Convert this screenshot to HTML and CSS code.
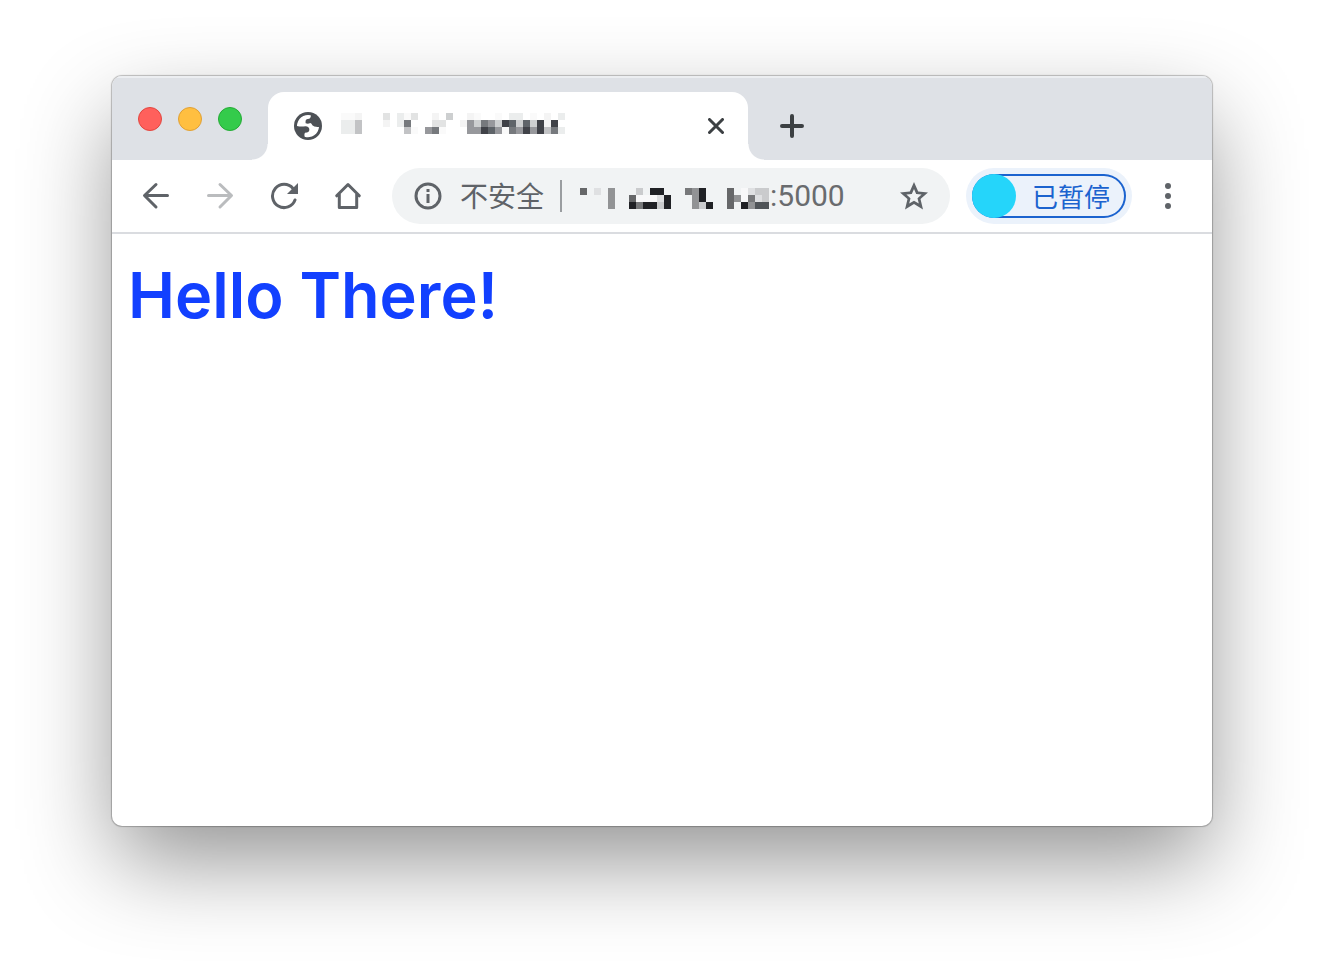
FILE: index.html
```
<!DOCTYPE html>
<html lang="zh-CN">
<head>
<meta charset="utf-8">
<meta name="viewport" content="width=device-width, initial-scale=1">
<title>Hello There!</title>
<link rel="stylesheet" href="styles.css">
</head>
<body>
<div class="window">
  <header class="tab-strip">
    <div class="lights">
      <button class="light light-close" aria-label="Close window"></button>
      <button class="light light-min" aria-label="Minimize window"></button>
      <button class="light light-max" aria-label="Zoom window"></button>
    </div>
    <div class="tab">
      <svg class="icon" width="28" height="28" viewBox="0 0 84 84" aria-hidden="true">
        <circle cx="42" cy="42" r="42" fill="#4d5156"/>
        <path fill="#fff" d="M9 42A33 33 0 0 1 50 10Q52 16 46 20Q40 20 36 23Q34 27 35 34Q42 37 49 33Q53 34 55 40Q60 46 75 45A33 33 0 0 1 32 74Q30 66 33 62Q46 62 46 53Q46 44 34 43Q20 45 9 42Z"/>
      </svg>
      <svg class="tab-mosaic" width="224" height="21" viewBox="0 0 32 3" shape-rendering="crispEdges" role="img" aria-label="Hidden title">
        <path fill="#fafafa" d="M0 0h2v1h-2zM19 0h1v1h-1zM22 0h1v1h-1zM10 2h1v1h-1zM14 2h1v1h-1zM23 2h1v1h-1zM27 0h1v1h-1zM9 0h1v1h-1z"/>
        <path fill="#f4f4f4" d="M2 0h1v1h-1zM6 1h1v1h-1zM13 0h1v1h-1zM17 1h1v1h-1zM18 0h1v1h-1zM29 0h1v2h-1z"/>
        <path fill="#ebeded" d="M0 1h2v2h-2zM8 0h1v2h-1zM24 0h2v1h-2zM31 0h1v1h-1zM31 2h1v1h-1z"/>
        <path fill="#e2e3e3" d="M6 0h1v1h-1zM10 0h1v1h-1zM13 1h2v1h-2z"/>
        <path fill="#cdcfd0" d="M15 0h1v1h-1zM19 1h1v1h-1zM22 1h1v1h-1zM25 1h1v1h-1zM27 1h1v1h-1z"/>
        <path fill="#c2c3c5" d="M2 1h1v2h-1zM9 2h1v1h-1zM29 2h1v1h-1z"/>
        <path fill="#97989c" d="M12 2h1v1h-1zM18 1h1v2h-1zM21 1h1v1h-1zM22 2h1v1h-1zM25 2h1v1h-1zM19 2h1v1h-1zM27 2h1v1h-1z"/>
        <path fill="#76797d" d="M9 1h1v1h-1zM13 2h1v1h-1zM20 1h1v1h-1zM24 2h1v1h-1zM30 2h1v1h-1z"/>
        <path fill="#5f6469" d="M21 2h1v1h-1zM24 1h1v1h-1zM26 1h1v1h-1z"/>
        <path fill="#404248" d="M20 2h1v1h-1zM23 1h1v1h-1zM26 2h1v1h-1zM28 1h1v2h-1zM30 1h1v1h-1z"/>
      </svg>
      <button class="tab-close" aria-label="Close tab">
        <svg class="icon" width="16" height="16" viewBox="0 0 16 16" fill="none" stroke="#3c4043" stroke-width="3" stroke-linecap="round"><path d="M1.500 1.500l13 13M14.500 1.500l-13 13"/></svg>
      </button>
    </div>
    <button class="new-tab" aria-label="New tab">
      <svg class="icon" width="24" height="24" viewBox="0 0 24 24" fill="none" stroke="#3c4043" stroke-width="4" stroke-linecap="round"><path d="M12 2v20M2 12h20"/></svg>
    </button>
  </header>

  <nav class="toolbar">
    <div class="nav-buttons">
      <button class="tool" aria-label="Back">
        <svg class="icon" width="28" height="28" viewBox="0 0 28 28" fill="none" stroke="#5f6368" stroke-width="3" stroke-linecap="round" stroke-linejoin="round"><path d="M25.500 13.500H3M14 2.500L2.500 13.500L14 25"/></svg>
      </button>
      <button class="tool" aria-label="Forward">
        <svg class="icon" width="28" height="28" viewBox="0 0 28 28" fill="none" stroke="#babcbe" stroke-width="3" stroke-linecap="round" stroke-linejoin="round"><path d="M2.500 13.500H25M14 2.500L25.500 13.500L14 25"/></svg>
      </button>
      <button class="tool" aria-label="Reload">
        <svg class="icon" width="28" height="28" viewBox="0 0 28 28"><path fill="none" stroke="#5f6368" stroke-width="3" stroke-linecap="round" d="M25 18A11.600 11.600 0 1 1 23 6.500"/><path fill="#5f6368" d="M28 1v11H17z"/></svg>
      </button>
      <button class="tool" aria-label="Home">
        <svg class="icon" width="28" height="28" viewBox="0 0 28 28" fill="none" stroke="#5f6368" stroke-width="3" stroke-linecap="round" stroke-linejoin="round"><path d="M2.700 13.800L14 2.500L25.300 13.800M5.300 12V25.500H22.700V12"/></svg>
      </button>
    </div>
    <div class="omnibox">
      <button class="security">
        <svg class="icon" width="28" height="28" viewBox="0 0 28 28"><circle cx="14" cy="14" r="12" fill="none" stroke="#5f6368" stroke-width="3"/><path fill="#5f6368" d="M12.500 7h3v3h-3zM12.500 12h3v9h-3z"/></svg>
        <span>不安全</span>
      </button>
      <span class="divider"></span>
      <svg class="url-mosaic" width="189" height="21" viewBox="0 0 27 3" shape-rendering="crispEdges" role="img" aria-label="Hidden address">
        <path fill="#666769" d="M0 0h1v1h-1zM7 1h1v1h-1zM21 0h1v3h-1z"/>
        <path fill="#dfe0e2" d="M2 0h1v1h-1zM11 1h1v1h-1zM24 0h1v1h-1zM25 1h1v1h-1z"/>
        <path fill="#929395" d="M4 0h1v3h-1zM16 0h1v3h-1zM22 1h1v1h-1zM24 2h1v1h-1z"/>
        <path fill="#cacbcd" d="M8 0h1v1h-1zM11 2h1v1h-1zM17 2h1v1h-1zM25 0h2v1h-2zM26 1h1v1h-1z"/>
        <path fill="#77787a" d="M8 2h1v1h-1zM15 0h1v1h-1zM24 1h1v1h-1z"/>
        <path fill="#f8f8f9" d="M8 1h3v1h-3zM23 0h1v2h-1z"/>
        <path fill="#505458" d="M25 2h2v1h-2z"/>
        <path fill="#202125" d="M7 2h1v1h-1zM9 2h2v1h-2zM10 0h2v1h-2zM12 1h1v2h-1zM17 0h1v2h-1zM18 2h1v1h-1zM23 2h1v1h-1z"/>
      </svg>
      <input class="url" type="text" aria-label="Address" value=":5000">
      <button class="tool-star" aria-label="Bookmark">
        <svg class="icon" width="28" height="28" viewBox="0 0 28 28"><path fill="#5f6368" fill-rule="evenodd" d="M14 0L18.200 9.600L28 10.400L20.500 17.100L23 27.500L14 22L5 27.500L7.500 17.100L0 10.400L9.800 9.600ZM14 7L11.800 12.100L6.400 12.600L10.500 16.200L9.200 21.600L14 18.800L18.800 21.600L17.500 16.200L21.600 12.600L16.200 12.100Z"/></svg>
      </button>
    </div>
    <button class="profile">
      <span class="profile-inner"><span class="avatar"></span><span class="profile-label">已暂停</span></span>
    </button>
    <button class="tool" aria-label="Menu">
      <svg class="icon" width="8" height="28" viewBox="0 0 8 28" fill="#5f6368"><circle cx="4" cy="4" r="3"/><circle cx="4" cy="14" r="3"/><circle cx="4" cy="24" r="3"/></svg>
    </button>
  </nav>

  <main class="page">
    <h1>Hello There!</h1>
  </main>
</div>
</body>
</html>
```
FILE: styles.css
```
* {
  box-sizing: border-box;
}

body {
  margin: 0;
  min-height: 100vh;
  padding: 76px 112px 148px;
  display: flex;
  background: #fff;
  font-family: "Roboto", "Noto Sans CJK SC", sans-serif;
}

button {
  display: flex;
  align-items: center;
  justify-content: center;
  padding: 0;
  border: 0;
  background: none;
  font: inherit;
  color: inherit;
}

.icon {
  display: block;
  flex: none;
}

.window {
  flex: 1;
  min-width: 0;
  display: flex;
  flex-direction: column;
  border-radius: 10px;
  overflow: hidden;
  background: #fff;
  box-shadow: 0 0 1px 1px rgba(0, 0, 0, 0.24), 0 38px 92px -4px rgba(0, 0, 0, 0.43);
}

.tab-strip {
  display: flex;
  height: 84px;
  padding: 16px 26px 0;
  background: #dee1e6;
  box-shadow: inset 0 2px 0 #eceef1;
}

.lights {
  display: flex;
  gap: 16px;
  padding-top: 15px;
  margin-right: 26px;
}

.light {
  width: 24px;
  height: 24px;
  border: 1px solid;
  border-radius: 50%;
}

.light-close {
  background: #ff605c;
  border-color: #e2463f;
}

.light-min {
  background: #ffbf40;
  border-color: #e0a035;
}

.light-max {
  background: #34cb4b;
  border-color: #24ab35;
}

.tab {
  position: relative;
  display: flex;
  align-items: center;
  width: 480px;
  padding: 0 20px 0 26px;
  border-radius: 16px 16px 0 0;
  background: #fff;
}

.tab::before,
.tab::after {
  content: "";
  position: absolute;
  bottom: 0;
  width: 16px;
  height: 16px;
}

.tab::before {
  right: 100%;
  background: radial-gradient(circle at 0 0, transparent 15px, #fff 16px);
}

.tab::after {
  left: 100%;
  background: radial-gradient(circle at 100% 0, transparent 15px, #fff 16px);
}

.tab-mosaic {
  margin: 0 auto 5px 19px;
}

.tab-close {
  width: 24px;
  height: 24px;
}

.new-tab {
  width: 40px;
  margin-left: 24px;
}

.toolbar {
  display: flex;
  align-items: center;
  padding: 8px 24px;
  border-bottom: 2px solid #dadce0;
  gap: 16px;
}

.nav-buttons {
  display: flex;
  gap: 24px;
  margin-right: 8px;
}

.tool {
  width: 40px;
  height: 40px;
}

.omnibox {
  flex: 1;
  min-width: 0;
  display: flex;
  align-items: center;
  height: 56px;
  padding: 0 22px;
  border-radius: 28px;
  background: #f1f3f4;
  color: #5f6368;
}

.security {
  gap: 18px;
  flex: none;
  font-size: 28px;
  line-height: 40px;
}

.security span,
.profile-label {
  padding-top: 3px;
}

.divider {
  flex: none;
  width: 2px;
  height: 32px;
  margin: 0 18px 0 16px;
  background: #9a9da0;
}

.url-mosaic {
  flex: none;
  margin-top: 5px;
}

.url {
  flex: 1;
  min-width: 0;
  padding: 0 0 0 1px;
  border: 0;
  outline: 0;
  background: none;
  color: #696b6e;
  font: 30px/40px "Roboto", sans-serif;
}

.profile {
  height: 56px;
  padding: 6px;
  border-radius: 28px;
  background: #ebf2fb;
  color: #1b63cf;
  font-size: 26px;
  line-height: 40px;
}

.profile-inner {
  display: flex;
  align-items: center;
  gap: 16px;
  height: 44px;
  padding-right: 16px;
  border-radius: 22px;
  box-shadow: inset 0 0 0 2px #1b63cf;
}

.avatar {
  width: 44px;
  height: 44px;
  border-radius: 50%;
  background: #25d5fa;
}

.page {
  flex: 1;
  padding: 24px 16px;
}

h1 {
  margin: 0;
  color: #1240ff;
  font: 600 63px/74px "Inter", "Liberation Sans", sans-serif;
}
```
